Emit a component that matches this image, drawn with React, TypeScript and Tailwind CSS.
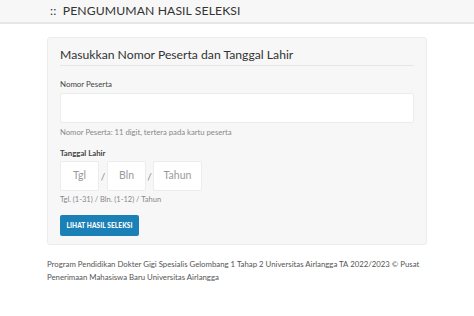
import React from "react";

export default function App() {
  const font = { fontFamily: "Lato, 'Open Sans', sans-serif" };
  return (
    <div className="w-[474px] h-[316px] bg-white overflow-hidden text-[#333]" style={font}>
      <div className="h-[24px] bg-[#f7f7f7] border-b-2 border-[#e6e6e6]">
        <div className="w-[380px] mx-auto pl-[3px] text-[12.2px] leading-[22px] text-[#333] tracking-[0.1px]">
          ::&nbsp; PENGUMUMAN HASIL SELEKSI
        </div>
      </div>
      <div className="w-[380px] mx-auto mt-[13px] bg-[#f7f7f7] border border-[#ececec] rounded-[3px] px-[12px] pt-[10px] pb-[8px]">
        <div className="text-[12.2px] leading-[14px] text-[#333] pb-[3px] border-b border-[#e6e6e6]">
          Masukkan Nomor Peserta dan Tanggal Lahir
        </div>
        <div className="mt-[12px] text-[7.9px] leading-[12px] text-[#444]">Nomor Peserta</div>
        <div className="mt-[3px] h-[30px] bg-white border border-[#ececec] rounded-[2px]"></div>
        <div className="mt-[3px] text-[7.7px] leading-[12px] text-[#888]">
          Nomor Peserta: 11 digit, tertera pada kartu peserta
        </div>
        <div className="mt-[9px] text-[7.8px] leading-[12px] font-bold text-[#444]">Tanggal Lahir</div>
        <div className="mt-[2px] flex items-center">
          <div className="w-[39px] h-[30px] bg-white border border-[#ececec] rounded-[2px] text-[10.5px] text-[#999] flex items-center justify-center">Tgl</div>
          <div className="w-[8px] text-center text-[10px] text-[#888]">/</div>
          <div className="w-[39px] h-[30px] bg-white border border-[#ececec] rounded-[2px] text-[10.5px] text-[#999] flex items-center justify-center">Bln</div>
          <div className="w-[7px] text-center text-[10px] text-[#888]">/</div>
          <div className="w-[49px] h-[30px] bg-white border border-[#ececec] rounded-[2px] text-[10.5px] text-[#999] flex items-center justify-center">Tahun</div>
        </div>
        <div className="mt-[3px] text-[7.5px] leading-[12px] text-[#888]">Tgl. (1-31) / Bln. (1-12) / Tahun</div>
        <div className="mt-[9px] w-[79px] h-[21px] bg-[#1a80b6] rounded-[2px] text-white text-[6.5px] font-black flex items-center justify-center tracking-[0.1px]">
          LIHAT HASIL SELEKSI
        </div>
      </div>
      <div className="w-[380px] mx-auto mt-[13px] text-[7.8px] leading-[13px] text-[#555]">
        Program Pendidikan Dokter Gigi Spesialis Gelombang 1 Tahap 2 Universitas Airlangga TA 2022/2023 © Pusat Penerimaan Mahasiswa Baru Universitas Airlangga
      </div>
    </div>
  );
}
